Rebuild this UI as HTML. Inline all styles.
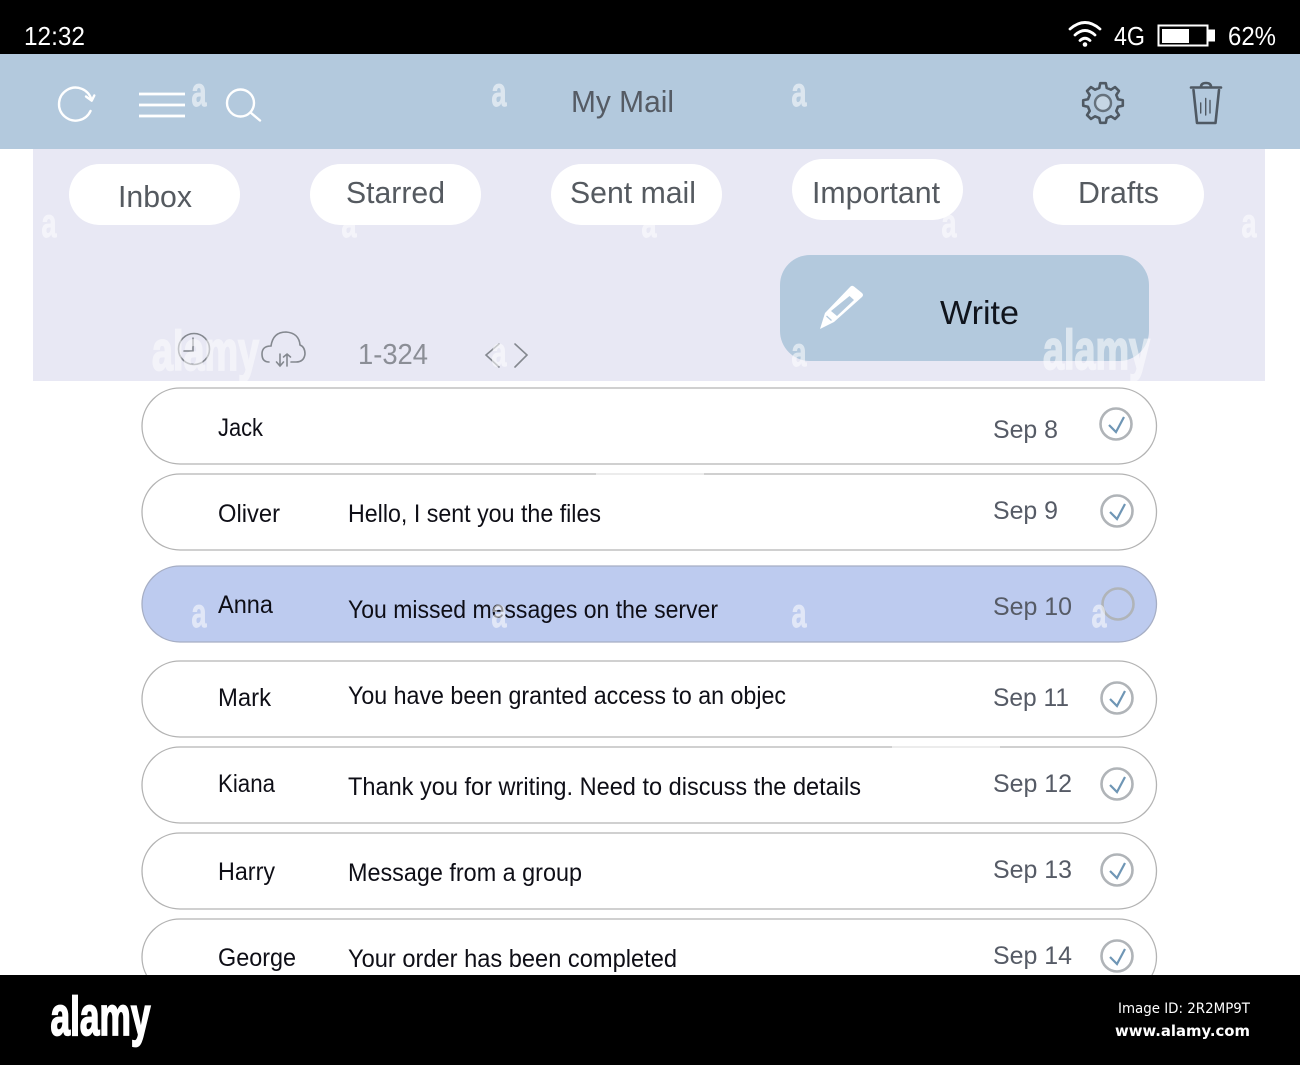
<!DOCTYPE html>
<html><head><meta charset="utf-8"><title>My Mail</title>
<style>
html,body{margin:0;padding:0;background:#fff;width:1300px;height:1065px;overflow:hidden}
svg{display:block}
text{font-family:"Liberation Sans",sans-serif}
.n{font-size:25px;fill:#0e0e16}
.d{font-size:25px;fill:#565b66}
.tab{font-size:31px;fill:#555a60}
.big{font-size:56px;font-weight:bold;fill:#fff;stroke:#fff;stroke-width:1.800}
.a{font-size:41px;font-weight:bold;fill:#fff;stroke:#fff;stroke-width:.8}
</style></head><body>
<svg width="1300" height="1065" viewBox="0 0 1300 1065" xmlns="http://www.w3.org/2000/svg">
<rect width="1300" height="1065" fill="#fff"/>
<rect x="33" y="149" width="1232" height="232" fill="#e8e8f4"/>
<rect y="0" width="1300" height="54" fill="#000"/>
<rect y="54" width="1300" height="95" fill="#b3c9dd"/>

<!-- status bar -->
<text x="24" y="45" font-size="26" fill="#fff" textLength="61" lengthAdjust="spacingAndGlyphs">12:32</text>
<g fill="none" stroke="#fff" stroke-width="2.800" stroke-linecap="round">
<path d="M1070 29Q1085 16 1100 29"/><path d="M1075 35Q1085 26 1095 35"/><path d="M1080 40.500Q1085 36 1090 40.500"/>
</g>
<circle cx="1085" cy="44.500" r="2.300" fill="#fff"/>
<text x="1114" y="45" font-size="26" fill="#fff" textLength="31" lengthAdjust="spacingAndGlyphs">4G</text>
<rect x="1158.500" y="25.500" width="49" height="20" fill="none" stroke="#fff" stroke-width="2"/>
<rect x="1162" y="29" width="27" height="14" fill="#fff"/>
<rect x="1208.500" y="29.500" width="6.500" height="12" fill="#fff"/>
<text x="1228" y="45" font-size="26" fill="#fff" textLength="48" lengthAdjust="spacingAndGlyphs">62%</text>

<!-- header icons -->
<g fill="none" stroke="#fff" stroke-width="2.400" stroke-linecap="round" stroke-linejoin="round">
<path d="M90.500 111A16.500 16.500 0 1 1 91.500 100"/>
<path d="M86 96.500L91.700 100.700L94.300 95.500"/>
<path d="M139 94H185M139 105H185M139 116H185" stroke-linecap="butt" stroke-width="2.700"/>
<circle cx="240.500" cy="103" r="13.500"/><path d="M250.500 112.500L260 120.500"/>
</g>
<text x="571" y="112" font-size="31" fill="#555b64" textLength="103" lengthAdjust="spacingAndGlyphs">My Mail</text>

<!-- gear -->
<g transform="translate(1103,103)">
<path fill="none" stroke="#4f5963" stroke-width="2.600" stroke-linejoin="round" d="M-3.750 -15.040L-2.780 -19.800L2.780 -19.800L3.750 -15.040L7.980 -13.290L12.040 -15.970L15.970 -12.040L13.290 -7.980L15.040 -3.750L19.800 -2.780L19.800 2.780L15.040 3.750L13.290 7.980L15.970 12.040L12.040 15.970L7.980 13.290L3.750 15.040L2.780 19.800L-2.780 19.800L-3.750 15.040L-7.980 13.290L-12.040 15.970L-15.970 12.040L-13.290 7.980L-15.040 3.750L-19.800 2.780L-19.800 -2.780L-15.040 -3.750L-13.290 -7.980L-15.970 -12.040L-12.040 -15.970L-7.980 -13.290Z"/>
<circle r="8" fill="#c6d6e4" stroke="#66727d" stroke-width="2.400"/>
</g>
<!-- trash -->
<g fill="none" stroke="#4f5963" stroke-width="2.600" stroke-linecap="round" stroke-linejoin="round">
<path d="M1191 87.500H1221"/>
<path d="M1201 87Q1201 83 1206 83Q1211 83 1211 87"/>
<path d="M1193.500 90L1197 123H1215.500L1219 90"/>
<path d="M1200.700 103V113M1205.700 98.500V115M1210 100.500V113" stroke-width="1.400"/>
</g>

<!-- tabs -->
<g fill="#fff">
<rect x="69" y="164" width="171" height="61" rx="30.500"/>
<rect x="310" y="164" width="171" height="61" rx="30.500"/>
<rect x="551" y="164" width="171" height="61" rx="30.500"/>
<rect x="792" y="159" width="171" height="61" rx="30.500"/>
<rect x="1033" y="164" width="171" height="61" rx="30.500"/>
</g>
<text class="tab" x="118" y="207" textLength="74" lengthAdjust="spacingAndGlyphs">Inbox</text>
<text class="tab" x="346" y="203" textLength="99" lengthAdjust="spacingAndGlyphs">Starred</text>
<text class="tab" x="570" y="203" textLength="126" lengthAdjust="spacingAndGlyphs">Sent mail</text>
<text class="tab" x="812" y="203" textLength="128" lengthAdjust="spacingAndGlyphs">Important</text>
<text class="tab" x="1078" y="203" textLength="81" lengthAdjust="spacingAndGlyphs">Drafts</text>

<!-- write -->
<rect x="780" y="255" width="369" height="106" rx="30" fill="#b3c9dd"/>
<path d="M850.500 286.500Q852 285 854 286.500L862 293Q864 295 862 297L834 322L820 329L825 313Z" fill="#fff"/>
<path d="M849.500 296L854 300L837 316L831 311Z" fill="#b3c9dd"/>
<path d="M826.500 316L831.500 320.500" stroke="#b3c9dd" stroke-width="1.300"/>
<text x="940" y="324" font-size="33" fill="#10141c" textLength="79" lengthAdjust="spacingAndGlyphs">Write</text>

<!-- toolbar -->
<g fill="none" stroke="#84888f" stroke-width="1.600" stroke-linecap="round">
<circle cx="194" cy="349" r="15.500"/><path d="M193 338V351H184"/>
<path d="M269 362Q262 362 262 354Q262 346 271 346Q273 332 286 332Q299 333 300 345Q305 347 305 354Q304 362 296 362H291"/>
<path d="M280 354V366M276.500 362L280 366L283.500 362M287 366V354M283.500 357L287 354L290.500 357"/>
<path d="M499 344L486 355L499 367M515 344L527 355L515 367"/>
</g>
<text x="358" y="364" font-size="29" fill="#8b8e96" textLength="70" lengthAdjust="spacingAndGlyphs">1-324</text>

<!-- watermarks big -->
<text class="big" x="152" y="370" opacity=".5" textLength="107" lengthAdjust="spacingAndGlyphs">alamy</text>
<text class="big" x="1043" y="369" opacity=".55" textLength="107" lengthAdjust="spacingAndGlyphs">alamy</text>

<!-- rows -->
<g fill="#fff" stroke="#b3b3b3" stroke-width="1.300">
<rect x="142" y="388" width="1014.500" height="76" rx="38"/>
<rect x="142" y="474" width="1014.500" height="76" rx="38"/>
<rect x="142" y="566" width="1014.500" height="76" rx="38" fill="#bdcbef" stroke="#a6aec4"/>
<rect x="142" y="661" width="1014.500" height="76" rx="38"/>
<rect x="142" y="747" width="1014.500" height="76" rx="38"/>
<rect x="142" y="833" width="1014.500" height="76" rx="38"/>
<rect x="142" y="919" width="1014.500" height="76" rx="38"/>
</g>
<rect x="596" y="472" width="108" height="4" fill="#fff" opacity=".6"/>
<rect x="892" y="745" width="108" height="4" fill="#fff" opacity=".6"/>

<text class="n" x="218" y="436" textLength="45" lengthAdjust="spacingAndGlyphs">Jack</text>
<text class="n" x="218" y="522" textLength="62" lengthAdjust="spacingAndGlyphs">Oliver</text>
<text class="n" x="218" y="613" textLength="55" lengthAdjust="spacingAndGlyphs">Anna</text>
<text class="n" x="218" y="706" textLength="53" lengthAdjust="spacingAndGlyphs">Mark</text>
<text class="n" x="218" y="792" textLength="57" lengthAdjust="spacingAndGlyphs">Kiana</text>
<text class="n" x="218" y="880" textLength="57" lengthAdjust="spacingAndGlyphs">Harry</text>
<text class="n" x="218" y="966" textLength="78" lengthAdjust="spacingAndGlyphs">George</text>

<text class="n" x="348" y="522" textLength="253" lengthAdjust="spacingAndGlyphs">Hello, I sent you the files</text>
<text class="n" x="348" y="618" textLength="370" lengthAdjust="spacingAndGlyphs">You missed messages on the server</text>
<text class="n" x="348" y="704" textLength="438" lengthAdjust="spacingAndGlyphs">You have been granted access to an objec</text>
<text class="n" x="348" y="795" textLength="513" lengthAdjust="spacingAndGlyphs">Thank you for writing. Need to discuss the details</text>
<text class="n" x="348" y="881" textLength="234" lengthAdjust="spacingAndGlyphs">Message from a group</text>
<text class="n" x="348" y="967" textLength="329" lengthAdjust="spacingAndGlyphs">Your order has been completed</text>

<text class="d" x="993" y="438" textLength="65" lengthAdjust="spacingAndGlyphs">Sep 8</text>
<text class="d" x="993" y="519" textLength="65" lengthAdjust="spacingAndGlyphs">Sep 9</text>
<text class="d" x="993" y="615" textLength="79" lengthAdjust="spacingAndGlyphs">Sep 10</text>
<text class="d" x="993" y="706" textLength="76" lengthAdjust="spacingAndGlyphs">Sep 11</text>
<text class="d" x="993" y="792" textLength="79" lengthAdjust="spacingAndGlyphs">Sep 12</text>
<text class="d" x="993" y="878" textLength="79" lengthAdjust="spacingAndGlyphs">Sep 13</text>
<text class="d" x="993" y="964" textLength="79" lengthAdjust="spacingAndGlyphs">Sep 14</text>

<!-- checks -->
<g fill="none" stroke="#b0b4b8" stroke-width="2.600">
<circle cx="1116" cy="424" r="15.500"/><circle cx="1117" cy="511" r="15.500"/>
<circle cx="1118" cy="604" r="15.500"/><circle cx="1117" cy="698" r="15.500"/>
<circle cx="1117" cy="784" r="15.500"/><circle cx="1117" cy="870" r="15.500"/>
<circle cx="1117" cy="956" r="15.500"/>
</g>
<g fill="none" stroke="#6f96b5" stroke-width="2.200">
<path d="M1109 425L1116 432L1124 417"/><path d="M1110 512L1117 519L1125 504"/>
<path d="M1110 699L1117 706L1125 691"/><path d="M1110 785L1117 792L1125 777"/>
<path d="M1110 871L1117 878L1125 863"/><path d="M1110 957L1117 964L1125 949"/>
</g>

<!-- small watermark a's -->
<g opacity=".55">
<text class="a" x="191.500" y="106" textLength="15" lengthAdjust="spacingAndGlyphs">a</text>
<text class="a" x="491.500" y="106" textLength="15" lengthAdjust="spacingAndGlyphs">a</text>
<text class="a" x="791.500" y="106" textLength="15" lengthAdjust="spacingAndGlyphs">a</text>
<text class="a" x="41.500" y="237" textLength="15" lengthAdjust="spacingAndGlyphs">a</text>
<text class="a" x="341.500" y="237" textLength="15" lengthAdjust="spacingAndGlyphs">a</text>
<text class="a" x="641.500" y="237" textLength="15" lengthAdjust="spacingAndGlyphs">a</text>
<text class="a" x="941.500" y="237" textLength="15" lengthAdjust="spacingAndGlyphs">a</text>
<text class="a" x="1241.500" y="237" textLength="15" lengthAdjust="spacingAndGlyphs">a</text>
<text class="a" x="491.500" y="366" textLength="15" lengthAdjust="spacingAndGlyphs">a</text>
<text class="a" x="791.500" y="366" textLength="15" lengthAdjust="spacingAndGlyphs">a</text>
<text class="a" x="191.500" y="627" textLength="15" lengthAdjust="spacingAndGlyphs">a</text>
<text class="a" x="491.500" y="627" textLength="15" lengthAdjust="spacingAndGlyphs">a</text>
<text class="a" x="791.500" y="627" textLength="15" lengthAdjust="spacingAndGlyphs">a</text>
<text class="a" x="1091.500" y="627" textLength="15" lengthAdjust="spacingAndGlyphs">a</text>
</g>

<!-- footer -->
<rect y="975" width="1300" height="90" fill="#000"/>
<text x="50.500" y="1035" font-size="55" font-weight="bold" fill="#fff" stroke="#fff" stroke-width="1.800" textLength="100" lengthAdjust="spacingAndGlyphs">alamy</text>
<text x="1118" y="1013" font-size="14.500" fill="#fff" textLength="132" lengthAdjust="spacingAndGlyphs" style="font-family:'DejaVu Sans',sans-serif">Image ID: 2R2MP9T</text>
<text x="1115" y="1036" font-size="15.500" font-weight="bold" fill="#fff" textLength="135" lengthAdjust="spacingAndGlyphs" style="font-family:'DejaVu Sans',sans-serif">www.alamy.com</text>
</svg>
</body></html>
